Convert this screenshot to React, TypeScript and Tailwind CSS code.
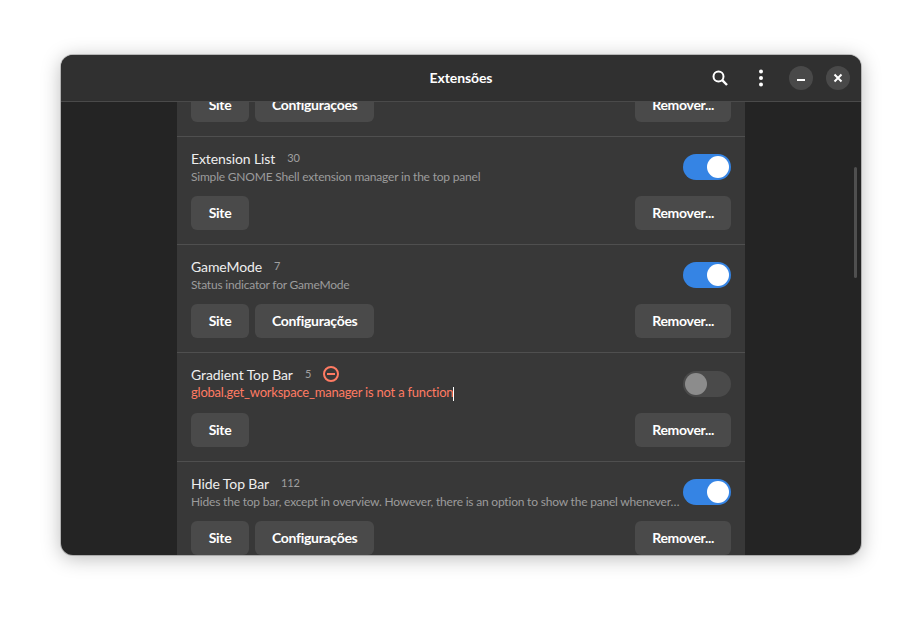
const rows = [
  { name: "Extension List", count: "30", desc: "Simple GNOME Shell extension manager in the top panel", on: true, settings: false },
  { name: "GameMode", count: "7", desc: "Status indicator for GameMode", on: true, settings: true },
  { name: "Gradient Top Bar", count: "5", desc: "global.get_workspace_manager is not a function", on: false, settings: false, error: true },
  {
    name: "Hide Top Bar",
    count: "112",
    desc: "Hides the top bar, except in overview. However, there is an option to show the panel whenever the mouse pointer approaches the edge of the screen.",
    on: true,
    settings: true,
  },
]

function Btn({ children }: { children: React.ReactNode }) {
  return (
    <button className="h-[34px] min-w-[58px] px-[17px] pb-[2px] rounded-[6px] bg-[#4a4a4a] text-[14px] font-bold text-white tracking-[-0.3px]">
      {children}
    </button>
  )
}

function Toggle({ on }: { on: boolean }) {
  return (
    <div className={`w-[48px] h-[26px] shrink-0 rounded-full flex items-center px-[2px] ${on ? "bg-[#3584e4] justify-end" : "bg-[#4a4a4a] justify-start"}`}>
      <div className={`w-[22px] h-[22px] rounded-full ${on ? "bg-white" : "bg-[#8c8c8c]"}`} />
    </div>
  )
}

function Buttons({ settings }: { settings?: boolean }) {
  return (
    <div className="flex justify-between">
      <div className="flex gap-[6px]">
        <Btn>Site</Btn>
        {settings && <Btn>Configurações</Btn>}
      </div>
      <Btn>Remover...</Btn>
    </div>
  )
}

export default function App() {
  return (
    <div className="w-[922px] h-[622px] bg-white pl-[61px] pt-[55px] overflow-hidden font-['Lato',sans-serif]">
      <div className="relative w-[800px] h-[500px] rounded-[12px] overflow-hidden bg-[#242424] flex flex-col shadow-[0_3px_20px_rgba(0,0,0,0.28)] ring-1 ring-black/20">
        <header className="relative z-10 h-[47px] shrink-0 flex items-center justify-end pr-[11px] bg-[#303030] border-b border-[#4a4a4a]">
          <div className="absolute inset-x-0 pb-[2px] text-center text-[14px] font-bold text-white tracking-[-0.1px]">Extensões</div>
          <svg className="mr-[31px] -mt-[1px]" width="16" height="16" viewBox="0 0 16 16" fill="none" stroke="white">
            <circle cx="6.5" cy="6.5" r="5" strokeWidth="2" />
            <path d="M10.2 10.2L15 15" strokeWidth="2.4" />
          </svg>
          <svg className="mr-[26px] -mt-[1px]" width="4" height="18" viewBox="0 0 4 18" fill="white">
            <circle cx="2" cy="2.5" r="2" />
            <circle cx="2" cy="9" r="2" />
            <circle cx="2" cy="15.5" r="2" />
          </svg>
          <div className="w-[24px] h-[24px] rounded-full bg-[#494949] flex items-center justify-center mr-[13px] -mt-[1px]">
            <div className="w-[8px] h-[2px] bg-white mt-[5px]" />
          </div>
          <div className="w-[24px] h-[24px] rounded-full bg-[#494949] flex items-center justify-center -mt-[1px]">
            <svg width="10" height="10" viewBox="0 0 10 10"><path d="M1.5 1.5l7 7M8.5 1.5l-7 7" stroke="white" strokeWidth="2" /></svg>
          </div>
        </header>

        <div className="flex-1 overflow-hidden">
          <div className="w-[568px] ml-[116px] bg-[#383838] -mt-[14px]">
            <div className="px-[14px] pb-[14px] border-b border-[#4f4f4f]">
              <Buttons settings />
            </div>
            {rows.map((r) => (
              <div key={r.name} className="px-[14px] pt-[12px] pb-[14px] border-b border-[#4f4f4f]">
                <div className={`flex items-start gap-[2px] ${r.error ? "mb-[11px]" : "mb-[9px]"}`}>
                  <div className="flex-1 min-w-0">
                    <div className="flex items-center h-[18px] text-[14px] text-[#eeeeee] tracking-[-0.1px]">
                      <span>{r.name}</span>
                      <span className="ml-[12px] pt-[1px] text-[11px] text-[#a0a0a0]">{r.count}</span>
                      {r.error && (
                        <svg className="ml-[11px]" width="18" height="18" viewBox="0 0 18 18" fill="none">
                          <circle cx="9" cy="9" r="7" stroke="#ff7b63" strokeWidth="2" />
                          <path d="M5 9h8" stroke="#ff7b63" strokeWidth="2" />
                        </svg>
                      )}
                    </div>
                    <div className={`truncate ${r.error ? "text-[13px] leading-[19px] tracking-[-0.22px] text-[#ff7b63]" : "text-[12px] leading-[20px] tracking-[-0.2px] text-[#9c9c9c]"}`}>
                      {r.desc}
                      {r.error && <span className="inline-block w-px h-[14px] bg-white align-middle" />}
                    </div>
                  </div>
                  <div className={r.error ? "mt-[6px]" : "mt-[5px]"}>
                    <Toggle on={r.on} />
                  </div>
                </div>
                <Buttons settings={r.settings} />
              </div>
            ))}
          </div>
        </div>

        <div className="absolute right-[4px] top-[112px] w-[3px] h-[111px] rounded-full bg-[#4f4f4f]" />
      </div>
    </div>
  )
}
